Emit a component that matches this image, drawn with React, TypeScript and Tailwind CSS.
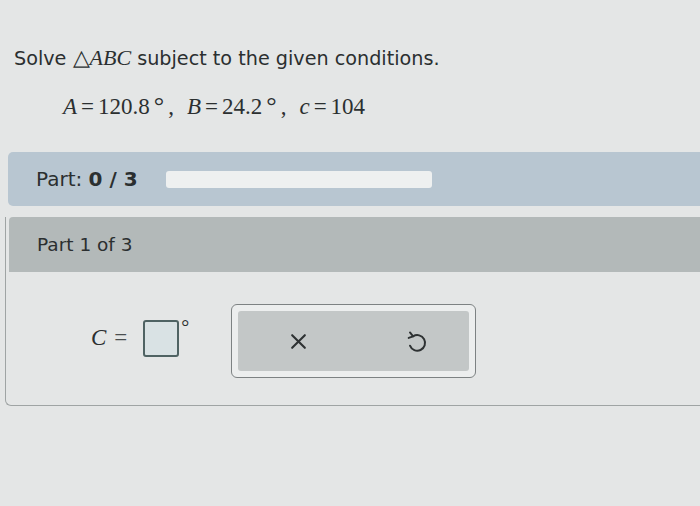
import React from 'react';

const serif = { fontFamily: '"Liberation Serif", "Times New Roman", serif' };

const Eq: React.FC = () => <span className="mx-[4px]">=</span>;
const Deg: React.FC = () => <span className="ml-[4px] text-[26px] leading-none">°</span>;

const App: React.FC = () => {
  return (
    <div
      className="w-[700px] h-[506px] overflow-hidden bg-[#e4e6e6] text-[#2b2f30]"
      style={{ fontFamily: '"DejaVu Sans", Verdana, sans-serif' }}
    >
      {/* Question */}
      <div className="pt-[44px] pl-[14px] text-[19.2px] leading-[28px]">
        Solve{' '}
        <span className="text-[22px]" style={serif}>
          △<i>ABC</i>
        </span>{' '}
        subject to the given conditions.
      </div>
      <div className="pl-[63px] mt-[20px] text-[23px] leading-[25px] flex items-baseline" style={serif}>
        <i>A</i>
        <Eq />
        <span>120.8</span>
        <Deg />
        <span className="ml-[4px]">,</span>
        <i className="ml-[13px]">B</i>
        <Eq />
        <span>24.2</span>
        <Deg />
        <span className="ml-[4px]">,</span>
        <i className="ml-[13px]">c</i>
        <Eq />
        <span>104</span>
      </div>

      {/* Progress bar */}
      <div className="ml-[8px] mt-[33px] h-[54px] rounded-l-[5px] bg-[#b8c6d1] flex items-center pl-[28px]">
        <span className="text-[20px]">
          Part: <b className="font-bold">0 / 3</b>
        </span>
        <div className="ml-[28px] w-[266px] h-[17px] rounded-[3px] bg-[#eef0f0]" />
      </div>

      {/* Part panel */}
      <div className="ml-[5px] mt-[11px] h-[189px] border-l border-b border-[#9fa4a4] rounded-bl-[6px] flex flex-col">
        <div className="ml-[3px] h-[55px] rounded-tl-[4px] bg-[#b3b9b9] flex items-center pl-[28px] text-[18.5px]">
          Part 1 of 3
        </div>
        <div className="flex items-start pt-[32px]">
          <div className="flex items-center ml-[85px] mt-[16px]">
            <span className="text-[23px]" style={serif}>
              <i>C</i>
            </span>
            <span className="ml-[8px] text-[23px] text-[#4a4e4f]" style={serif}>
              =
            </span>
            <div className="ml-[16px] w-[36px] h-[37px] border-2 border-[#4f6363] rounded-[3px] bg-[#d9e2e4]" />
            <span className="self-start -mt-[8px] ml-[2px] text-[20px]" style={serif}>
              °
            </span>
          </div>
          <div className="ml-[42px] w-[245px] h-[74px] rounded-[6px] border border-[#7d8283] bg-[#eceeee] p-[6px]">
            <div className="h-full rounded-[3px] bg-[#c3c7c7] flex items-center">
              <div className="w-1/2 flex justify-center pl-[4px]">
                <svg width="19" height="19" viewBox="0 0 18 18" fill="none" stroke="#2e3233" strokeWidth="2" strokeLinecap="round">
                  <path d="M3 3l12 12M15 3L3 15" />
                </svg>
              </div>
              <div className="w-1/2 flex justify-center pl-[10px]">
                <svg width="26" height="26" viewBox="0 0 20 20" fill="none" stroke="#2e3233" strokeWidth="1.5" strokeLinecap="round" strokeLinejoin="round">
                  <path d="M7 6.4A6 6 0 1 1 4.6 13.6" />
                  <path d="M4.6 3.4L7 6.4 3.6 7.6" />
                </svg>
              </div>
            </div>
          </div>
        </div>
      </div>
    </div>
  );
};

export default App;
